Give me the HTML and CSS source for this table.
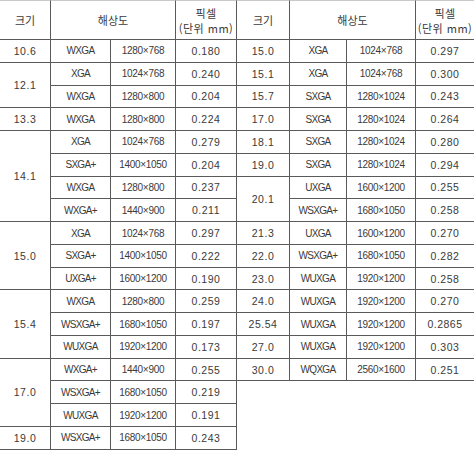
FILE: index.html
```html
<!DOCTYPE html>
<html lang="ko">
<head>
<meta charset="utf-8">
<title>노트북 패널 해상도 및 픽셀 크기</title>
<link rel="stylesheet" href="styles.css">
</head>
<body>
<div class="sheet">
  <table class="grid grid-left">
    <colgroup><col class="c-size-l"><col class="c-name-l"><col class="c-res-l"><col class="c-px-l"></colgroup>
    <thead>
      <tr class="head"><th>크기</th><th colspan="2">해상도</th><th class="px-head">픽셀<br>(단위 mm)</th></tr>
    </thead>
    <tbody>
      <tr><td class="size">10.6</td><td class="name">WXGA</td><td class="res">1280×768</td><td class="num">0.180</td></tr>
      <tr><td class="size" rowspan="2">12.1</td><td class="name">XGA</td><td class="res">1024×768</td><td class="num">0.240</td></tr>
      <tr><td class="name">WXGA</td><td class="res">1280×800</td><td class="num">0.204</td></tr>
      <tr><td class="size">13.3</td><td class="name">WXGA</td><td class="res">1280×800</td><td class="num">0.224</td></tr>
      <tr><td class="size" rowspan="4">14.1</td><td class="name">XGA</td><td class="res">1024×768</td><td class="num">0.279</td></tr>
      <tr><td class="name">SXGA+</td><td class="res">1400×1050</td><td class="num">0.204</td></tr>
      <tr><td class="name">WXGA</td><td class="res">1280×800</td><td class="num">0.237</td></tr>
      <tr><td class="name">WXGA+</td><td class="res">1440×900</td><td class="num">0.211</td></tr>
      <tr><td class="size" rowspan="3">15.0</td><td class="name">XGA</td><td class="res">1024×768</td><td class="num">0.297</td></tr>
      <tr><td class="name">SXGA+</td><td class="res">1400×1050</td><td class="num">0.222</td></tr>
      <tr><td class="name">UXGA+</td><td class="res">1600×1200</td><td class="num">0.190</td></tr>
      <tr><td class="size" rowspan="3">15.4</td><td class="name">WXGA</td><td class="res">1280×800</td><td class="num">0.259</td></tr>
      <tr><td class="name">WSXGA+</td><td class="res">1680×1050</td><td class="num">0.197</td></tr>
      <tr><td class="name">WUXGA</td><td class="res">1920×1200</td><td class="num">0.173</td></tr>
      <tr><td class="size" rowspan="3">17.0</td><td class="name">WXGA+</td><td class="res">1440×900</td><td class="num">0.255</td></tr>
      <tr><td class="name">WSXGA+</td><td class="res">1680×1050</td><td class="num">0.219</td></tr>
      <tr><td class="name">WUXGA</td><td class="res">1920×1200</td><td class="num">0.191</td></tr>
      <tr><td class="size">19.0</td><td class="name">WSXGA+</td><td class="res">1680×1050</td><td class="num">0.243</td></tr>
    </tbody>
  </table>
  <table class="grid grid-right">
    <colgroup><col class="c-size-r"><col class="c-name-r"><col class="c-res-r"><col class="c-px-r"></colgroup>
    <thead>
      <tr class="head"><th>크기</th><th colspan="2">해상도</th><th class="px-head">픽셀<br>(단위 mm)</th></tr>
    </thead>
    <tbody>
      <tr><td class="size">15.0</td><td class="name">XGA</td><td class="res">1024×768</td><td class="num">0.297</td></tr>
      <tr><td class="size">15.1</td><td class="name">XGA</td><td class="res">1024×768</td><td class="num">0.300</td></tr>
      <tr><td class="size">15.7</td><td class="name">SXGA</td><td class="res">1280×1024</td><td class="num">0.243</td></tr>
      <tr><td class="size">17.0</td><td class="name">SXGA</td><td class="res">1280×1024</td><td class="num">0.264</td></tr>
      <tr><td class="size">18.1</td><td class="name">SXGA</td><td class="res">1280×1024</td><td class="num">0.280</td></tr>
      <tr><td class="size">19.0</td><td class="name">SXGA</td><td class="res">1280×1024</td><td class="num">0.294</td></tr>
      <tr><td class="size" rowspan="2">20.1</td><td class="name">UXGA</td><td class="res">1600×1200</td><td class="num">0.255</td></tr>
      <tr><td class="name">WSXGA+</td><td class="res">1680×1050</td><td class="num">0.258</td></tr>
      <tr><td class="size">21.3</td><td class="name">UXGA</td><td class="res">1600×1200</td><td class="num">0.270</td></tr>
      <tr><td class="size">22.0</td><td class="name">WSXGA+</td><td class="res">1680×1050</td><td class="num">0.282</td></tr>
      <tr><td class="size">23.0</td><td class="name">WUXGA</td><td class="res">1920×1200</td><td class="num">0.258</td></tr>
      <tr><td class="size">24.0</td><td class="name">WUXGA</td><td class="res">1920×1200</td><td class="num">0.270</td></tr>
      <tr><td class="size">25.54</td><td class="name">WUXGA</td><td class="res">1920×1200</td><td class="num">0.2865</td></tr>
      <tr><td class="size">27.0</td><td class="name">WUXGA</td><td class="res">1920×1200</td><td class="num">0.303</td></tr>
      <tr><td class="size">30.0</td><td class="name">WQXGA</td><td class="res">2560×1600</td><td class="num">0.251</td></tr>
    </tbody>
  </table>
</div>
</body>
</html>
```
FILE: styles.css
```css
html, body {
  margin: 0;
  padding: 0;
  background: #ffffff;
}

body {
  font-family: "Liberation Sans", "Noto Sans CJK KR", sans-serif;
  color: #3a3a3a;
}

.sheet {
  display: flex;
  align-items: flex-start;
  width: 474px;
}

.grid {
  border-collapse: separate;
  border-spacing: 0;
  table-layout: fixed;
  width: 237px;
  flex: none;
}

.grid th,
.grid td {
  padding: 0;
  border-right: 1px solid #5a5a5a;
  border-bottom: 1px solid #5a5a5a;
  text-align: center;
  vertical-align: middle;
  overflow: hidden;
  white-space: nowrap;
}

.grid th {
  border-top: 1px solid #c8c8c8;
  font-weight: normal;
  font-family: "Noto Sans CJK KR", "Liberation Sans", sans-serif;
  font-size: 11px;
  line-height: 15px;
  color: #3a3a3a;
}

.grid .px-head {
  padding-top: 1px;
  letter-spacing: 0.5px;
}

.head {
  height: 40px;
}

.grid tbody tr {
  height: 22.78px;
}

.c-size-l { width: 51px; }
.c-name-l { width: 60px; }
.c-res-l  { width: 65px; }
.c-px-l   { width: 61px; }

.c-size-r { width: 53px; }
.c-name-r { width: 57px; }
.c-res-r  { width: 69px; }
.c-px-r   { width: 58px; }

.grid-right th:last-child,
.grid-right td.num {
  border-right: none;
}

.size,
.num {
  font-size: 10.5px;
  letter-spacing: 0.5px;
}

.name {
  font-size: 10px;
  letter-spacing: -0.7px;
}

.res {
  font-size: 10px;
  letter-spacing: -0.3px;
}
```
